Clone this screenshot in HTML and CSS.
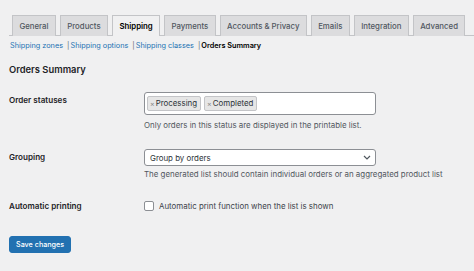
FILE: index.html
```html
<!DOCTYPE html>
<html>
<head>
<meta charset="utf-8">
<link rel="stylesheet" href="styles.css">
</head>
<body>
<div class="wrap">
  <nav class="tabs">
    <span class="tab">General</span>
    <span class="tab">Products</span>
    <span class="tab active">Shipping</span>
    <span class="tab">Payments</span>
    <span class="tab">Accounts &amp; Privacy</span>
    <span class="tab">Emails</span>
    <span class="tab">Integration</span>
    <span class="tab">Advanced</span>
  </nav>
  <ul class="subnav">
    <li><a>Shipping zones</a></li>
    <li><span class="sep">|</span><a>Shipping options</a></li>
    <li><span class="sep">|</span><a>Shipping classes</a></li>
    <li><span class="sep">|</span><b>Orders Summary</b></li>
  </ul>
  <h2 class="title">Orders Summary</h2>
  <div class="form">
    <div class="row row-status">
      <div class="label">Order statuses</div>
      <div class="field">
        <div class="multi">
          <span class="token"><span class="x">×</span>Processing</span>
          <span class="token"><span class="x">×</span>Completed</span>
        </div>
        <p class="desc">Only orders in this status are displayed in the printable list.</p>
      </div>
    </div>
    <div class="row row-group">
      <div class="label">Grouping</div>
      <div class="field">
        <div class="select">
          <span>Group by orders</span>
          <svg class="chev" width="8" height="5" viewBox="0 0 8 5"><path d="M1 1l3 3 3-3" fill="none" stroke="#50575e" stroke-width="1.2"/></svg>
        </div>
        <p class="desc">The generated list should contain individual orders or an aggregated product list</p>
      </div>
    </div>
    <div class="row row-print">
      <div class="label">Automatic printing</div>
      <div class="field">
        <label class="check"><span class="box"></span>Automatic print function when the list is shown</label>
      </div>
    </div>
  </div>
  <button class="save">Save changes</button>
</div>
</body>
</html>
```

FILE: styles.css
```css
* { box-sizing: border-box; }
html, body { margin: 0; padding: 0; }
body {
  background: #f0f0f1;
  font-family: Inter, "Noto Sans", sans-serif;
  font-size: 7.9px;
  color: #1d2327;
  width: 474px;
  height: 271px;
  overflow: hidden;
}
.wrap { padding: 14px 0 0 9px; }
.tabs {
  display: flex;
  gap: 4px;
  padding-left: 3px;
  border-bottom: 1px solid #c3c4c7;
  height: 22px;
}
.tab {
  flex: none;
  white-space: nowrap;
  height: 21px;
  margin-top: 1px;
  line-height: 20px;
  padding: 0 6.4px;
  background: #dcdcde;
  border: 1px solid #c3c4c7;
  border-bottom: none;
  color: #50575e;
  font-weight: 500;
  font-size: 7.8px;
}
.tab.active {
  background: #f0f0f1;
  color: #000;
  font-weight: 600;
  font-size: 7.8px;
  height: 21px;
  margin-bottom: -1px;
}
.subnav {
  list-style: none;
  margin: 0;
  padding: 0 0 0 1px;
  display: flex;
  height: 19px;
  align-items: center;
  color: #646970;
  font-size: 7.3px;
}
.subnav li { display: flex; align-items: center; white-space: nowrap; }
.subnav a { color: #2271b1; }
.subnav .sep { margin: 0 1px 0 4px; color: #646970; }
.subnav b { color: #000; font-weight: 600; }
.title {
  margin: 8px 0 0;
  font-size: 9.4px;
  font-weight: 600;
  height: 13px;
  line-height: 13px;
  color: #1d2327;
}
.form { margin-top: 16px; }
.row { display: flex; }
.label {
  width: 135px;
  flex: none;
  font-weight: 600;
  font-size: 8.1px;
}
.field { width: 330px; }
.row-status .label { padding-top: 3px; }
.multi {
  width: 232px;
  height: 23px;
  background: #fff;
  border: 1px solid #8c8f94;
  border-radius: 3px;
  display: flex;
  align-items: center;
  gap: 3px;
  padding: 0 2px;
}
.token {
  height: 15px;
  line-height: 13px;
  background: #e6e6e6;
  border: 1px solid #c3c4c7;
  border-radius: 2px;
  padding: 0 3px 0 2px;
  color: #2c3338;
}
.token .x { color: #888; margin-right: 1px; font-size: 7px; }
.desc {
  margin: 5px 0 0;
  color: #50575e;
  height: 11px;
  line-height: 11px;
  white-space: nowrap;
}
.row-group { margin-top: 18px; }
.row-group .label { padding-top: 3px; }
.select {
  width: 232px;
  height: 17px;
  background: #fff;
  border: 1px solid #8c8f94;
  border-radius: 3px;
  display: flex;
  align-items: center;
  justify-content: space-between;
  padding: 0 4px 0 5px;
  color: #2c3338;
}
.row-group .desc { margin-top: 3px; }
.row-print { margin-top: 21px; }
.row-print .label { padding-top: 0; }
.check { display: flex; align-items: center; color: #3c434a; }
.box {
  width: 10px;
  height: 10px;
  background: #fff;
  border: 1px solid #8c8f94;
  border-radius: 2px;
  margin-right: 5px;
}
.save {
  display: block;
  margin-top: 25px;
  height: 17px;
  padding: 0 6px;
  background: #2271b1;
  border: 1px solid #2271b1;
  border-radius: 3px;
  color: #fff;
  font-family: Inter, "Noto Sans", sans-serif;
  font-size: 7.2px;
  font-weight: 500;
}
```
